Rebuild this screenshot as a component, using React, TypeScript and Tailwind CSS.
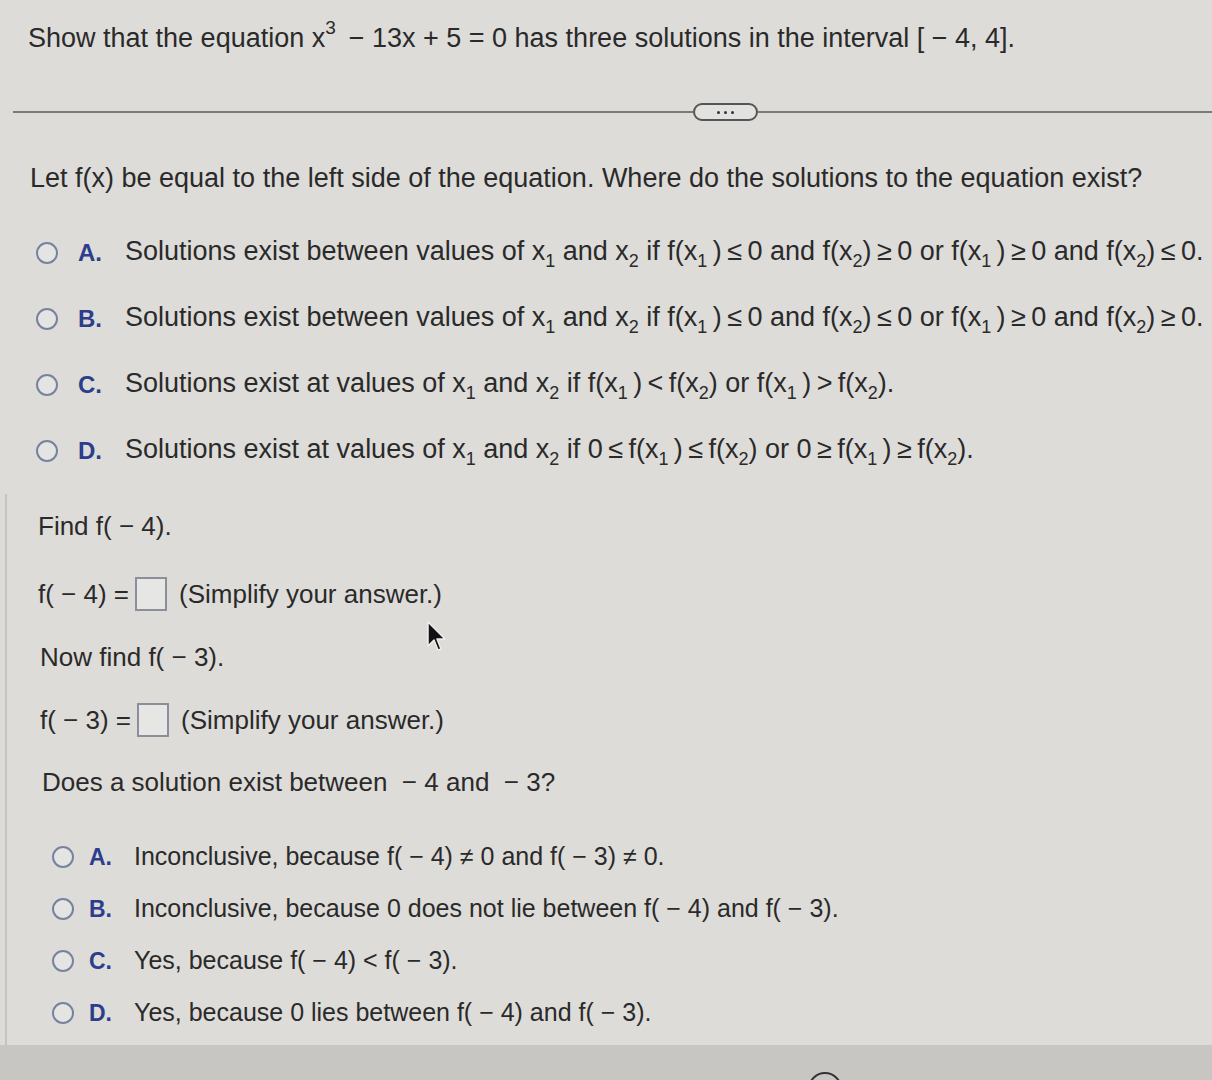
import React from 'react';

const font = { fontFamily: '"Liberation Sans", Arial, sans-serif' };

function Sub({ children }: { children: React.ReactNode }) {
  return <span className="text-[18px] align-[-0.4em]">{children}</span>;
}

function Radio({ size = 22 }: { size?: number }) {
  return (
    <span
      className="inline-block rounded-full border-2 border-[#7682a0] bg-[#e4e4e2] shrink-0"
      style={{ width: size, height: size }}
    />
  );
}

function AnswerBox() {
  return <span className="inline-block w-[32px] h-[34px] border-2 border-[#8a8f99] bg-[#e6e6e4] ml-[6px] mr-[12px]" />;
}

const x1 = (
  <>
    x<Sub>1</Sub>
  </>
);
const x2 = (
  <>
    x<Sub>2</Sub>
  </>
);
const fx1 = (
  <>
    f(x<Sub>1</Sub>&thinsp;)
  </>
);
const fx2 = (
  <>
    f(x<Sub>2</Sub>)
  </>
);

const firstOptions: { letter: string; body: React.ReactNode }[] = [
  {
    letter: 'A.',
    body: (
      <>
        Solutions exist between values of {x1} and {x2} if {fx1}&thinsp;≤&thinsp;0 and {fx2}&thinsp;≥&thinsp;0 or {fx1}&thinsp;≥&thinsp;0 and {fx2}&thinsp;≤&thinsp;0.
      </>
    ),
  },
  {
    letter: 'B.',
    body: (
      <>
        Solutions exist between values of {x1} and {x2} if {fx1}&thinsp;≤&thinsp;0 and {fx2}&thinsp;≤&thinsp;0 or {fx1}&thinsp;≥&thinsp;0 and {fx2}&thinsp;≥&thinsp;0.
      </>
    ),
  },
  {
    letter: 'C.',
    body: (
      <>
        Solutions exist at values of {x1} and {x2} if {fx1}&thinsp;&lt;&thinsp;{fx2} or {fx1}&thinsp;&gt;&thinsp;{fx2}.
      </>
    ),
  },
  {
    letter: 'D.',
    body: (
      <>
        Solutions exist at values of {x1} and {x2} if 0&thinsp;≤&thinsp;{fx1}&thinsp;≤&thinsp;{fx2} or 0&thinsp;≥&thinsp;{fx1}&thinsp;≥&thinsp;{fx2}.
      </>
    ),
  },
];

const secondOptions = [
  { letter: 'A.', body: 'Inconclusive, because f( − 4) ≠ 0 and f( − 3) ≠ 0.' },
  { letter: 'B.', body: 'Inconclusive, because 0 does not lie between f( − 4) and f( − 3).' },
  { letter: 'C.', body: 'Yes, because f( − 4) < f( − 3).' },
  { letter: 'D.', body: 'Yes, because 0 lies between f( − 4) and f( − 3).' },
];

export default function App() {
  return (
    <div className="relative w-[1212px] h-[1080px] overflow-hidden bg-[#dddcd9] text-[#2a2a2a]" style={font}>
      {/* question header */}
      <div className="pt-[12px] pl-[28px] h-[44px] text-[27px] leading-[32px] whitespace-nowrap">
        Show that the equation x<span className="text-[19px] align-[0.7em]">3</span>&thinsp; − 13x + 5 = 0 has three solutions in the interval [ − 4, 4].
      </div>

      {/* divider */}
      <div className="mt-[59px] pl-[13px] flex items-center h-[18px]">
        <div className="w-[680px] h-[2px] bg-[#7a7a7a]" />
        <div className="w-[65px] h-[18px] rounded-full border-2 border-[#555] flex items-center justify-center gap-[4px] bg-[#e2e2e0]">
          <span className="w-[3px] h-[3px] rounded-full bg-[#333]" />
          <span className="w-[3px] h-[3px] rounded-full bg-[#333]" />
          <span className="w-[3px] h-[3px] rounded-full bg-[#333]" />
        </div>
        <div className="flex-1 h-[2px] bg-[#7a7a7a]" />
      </div>

      <div className="mt-[41px] pl-[30px] h-[32px] text-[27px] leading-[32px] whitespace-nowrap">
        Let f(x) be equal to the left side of the equation. Where do the solutions to the equation exist?
      </div>

      <div className="mt-[43px] flex flex-col gap-[34px] text-[27px] whitespace-nowrap">
        {firstOptions.map((o) => (
          <div key={o.letter} className="flex items-center h-[32px] pl-[36px]">
            <Radio />
            <span className="w-[48px] pl-[20px] font-bold text-[#2c3d8c] text-[24px]">{o.letter}</span>
            <span className="pl-[19px]">{o.body}</span>
          </div>
        ))}
      </div>

      {/* lower panel with left rule */}
      <div className="mt-[27px] ml-[5px] border-l-2 border-[#c4c4c2] pb-[40px] text-[26px]">
        <div className="pt-[16px] pl-[31px] h-[48px] leading-[32px]">Find f( − 4).</div>
        <div className="mt-[35px] pl-[31px] h-[34px] flex items-center whitespace-nowrap">
          f( − 4) =<AnswerBox />(Simplify your answer.)
        </div>
        <div className="mt-[30px] pl-[33px] h-[32px] leading-[32px]">Now find f( − 3).</div>
        <div className="mt-[30px] pl-[33px] h-[34px] flex items-center whitespace-nowrap">
          f( − 3) =<AnswerBox />(Simplify your answer.)
        </div>
        <div className="mt-[29px] pl-[35px] h-[32px] leading-[32px] whitespace-nowrap">
          Does a solution exist between &nbsp;− 4 and &nbsp;− 3?
        </div>

        <div className="mt-[43px] flex flex-col gap-[20px] whitespace-nowrap text-[25px]">
          {secondOptions.map((o) => (
            <div key={o.letter} className="flex items-center h-[32px] pl-[45px]">
              <Radio />
              <span className="w-[52px] pl-[15px] font-bold text-[#2c3d8c] text-[23px]">{o.letter}</span>
              <span className="pl-[8px]">{o.body}</span>
            </div>
          ))}
        </div>
      </div>

      {/* mouse pointer */}
      <svg className="absolute left-[426px] top-[620px]" width="20" height="32" viewBox="0 0 20 32">
        <path d="M2 2 L2 26 L8 20 L12 30 L15 29 L11 19 L19 19 Z" fill="#111" stroke="#eee" strokeWidth="1.5" strokeLinejoin="round" />
      </svg>

      {/* bottom toolbar */}
      <div className="absolute left-0 right-0 top-[1045px] h-[35px] bg-[#c7c6c3]">
        <span className="absolute left-[808px] top-[27px] w-[34px] h-[34px] rounded-full border-2 border-[#333]" />
      </div>
    </div>
  );
}
